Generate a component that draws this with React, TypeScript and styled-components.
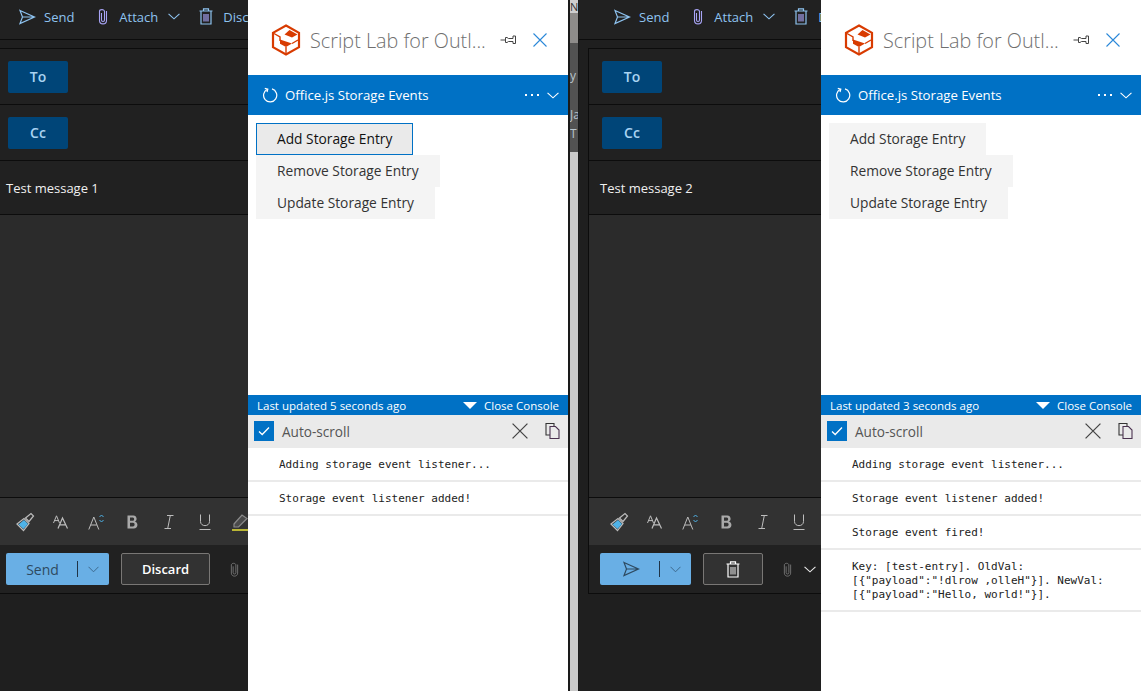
import React from 'react';
import styled, { createGlobalStyle } from 'styled-components';

const Global = createGlobalStyle`
  html, body { margin: 0; padding: 0; height: 100%; background: #1f1f1f; overflow: hidden; }
  #root { height: 100%; }
`;

const FONT = `"Open Sans", "Noto Sans", "Liberation Sans", sans-serif`;
const MONO = `"DejaVu Sans Mono", "Liberation Mono", monospace`;

const Page = styled.div`
  width: 1141px;
  height: 691px;
  display: flex;
  overflow: hidden;
  font-family: ${FONT};
`;

const Compose = styled.div<{ $w: number }>`
  width: ${p => p.$w}px;
  flex: none;
  height: 691px;
  background: #1f1f1f;
  overflow: hidden;
  display: flex;
  flex-direction: column;
`;

const CommandBar = styled.div<{ $inset: number }>`
  height: 40px;
  flex: none;
  box-sizing: border-box;
  display: flex;
  align-items: center;
  padding: 0 0 6px ${p => p.$inset}px;
  background: #212121;
  border-bottom: 1px solid #0c0c0c;
  white-space: nowrap;
  color: #8ec3f0;
  font-size: 13px;
`;

const Command = styled.div<{ $gap: number; $icon: number }>`
  display: flex;
  align-items: center;
  gap: ${p => p.$icon}px;
  margin-right: ${p => p.$gap}px;
  flex: none;
`;

const Card = styled.div<{ $inset: number }>`
  margin-top: 8px;
  margin-left: ${p => p.$inset}px;
  height: 544px;
  flex: none;
  border-top: 1px solid #0c0c0c;
  border-bottom: 1px solid #0c0c0c;
  border-left: ${p => (p.$inset ? '1px solid #0c0c0c' : 'none')};
  display: flex;
  flex-direction: column;
  background: #212121;
`;

const RecipientRow = styled.div`
  height: 55px;
  flex: none;
  display: flex;
  align-items: center;
  padding-left: 8px;
  border-bottom: 1px solid #0c0c0c;
`;

const RecipientButton = styled.div<{ $left: number }>`
  width: 60px;
  height: 32px;
  margin-left: ${p => p.$left}px;
  border-radius: 2px;
  background: #004578;
  color: #a9d3f2;
  font-size: 14px;
  font-weight: 600;
  display: flex;
  align-items: center;
  justify-content: center;
`;

const SubjectRow = styled.div<{ $left: number }>`
  height: 53px;
  flex: none;
  display: flex;
  align-items: center;
  padding-left: ${p => p.$left}px;
  border-bottom: 1px solid #0c0c0c;
  color: #f0f0f0;
  font-size: 13px;
  font-weight: 500;
`;

const Body = styled.div`
  flex: 1;
  background: #2b2b2b;
`;

const FormatBar = styled.div<{ $left: number }>`
  height: 47px;
  flex: none;
  background: #323232;
  border-top: 1px solid #0c0c0c;
  display: flex;
  align-items: center;
  padding-left: ${p => p.$left}px;
  gap: 12px;
  overflow: hidden;
`;

const FormatIcon = styled.div`
  width: 24px;
  height: 24px;
  flex: none;
  display: flex;
  align-items: center;
  justify-content: center;
`;

const SendBar = styled.div<{ $left: number }>`
  height: 48px;
  flex: none;
  display: flex;
  align-items: center;
  padding-left: ${p => p.$left}px;
  background: #212121;
  overflow: hidden;
`;

const SendButton = styled.div<{ $w: number }>`
  width: ${p => p.$w}px;
  height: 32px;
  flex: none;
  background: #69afe5;
  border-radius: 2px;
  display: flex;
  align-items: center;
  color: #2e4a60;
  font-size: 14px;
  font-weight: 500;
`;

const SendLabel = styled.div`
  flex: 1;
  display: flex;
  justify-content: center;
  padding-left: 2px;
`;

const SendDivider = styled.div`
  width: 1px;
  height: 16px;
  background: #1f3447;
  flex: none;
`;

const SendCaret = styled.div`
  width: 31px;
  flex: none;
  display: flex;
  justify-content: center;
  align-items: center;
`;

const DiscardButton = styled.div<{ $w: number; $left: number }>`
  width: ${p => p.$w}px;
  height: 32px;
  margin-left: ${p => p.$left}px;
  flex: none;
  box-sizing: border-box;
  border: 1px solid #797775;
  border-radius: 2px;
  background: #323232;
  color: #fff;
  font-size: 13px;
  font-weight: 600;
  display: flex;
  align-items: center;
  justify-content: center;
`;

const Clip = styled.div<{ $left: number }>`
  margin-left: ${p => p.$left}px;
  flex: none;
  display: flex;
  align-items: center;
`;

const MoreCaret = styled.div`
  margin-left: 12px;
  flex: none;
  display: flex;
  align-items: center;
`;

const Pane = styled.div`
  width: 320px;
  flex: none;
  height: 691px;
  background: #fff;
  display: flex;
  flex-direction: column;
`;

const PaneHeader = styled.div`
  height: 75px;
  flex: none;
  display: flex;
  align-items: center;
  padding: 5px 21px 0 23px;
  box-sizing: border-box;
  color: #6f6f6f;
`;

const PaneTitle = styled.div`
  flex: 1;
  margin-left: 9px;
  font-size: 19.8px;
  font-weight: 300;
  white-space: nowrap;
  overflow: hidden;
`;

const PaneActions = styled.div`
  display: flex;
  align-items: center;
  gap: 16px;
  margin-top: -1px;
`;

const SnippetBar = styled.div`
  height: 40px;
  flex: none;
  background: #0071c5;
  color: #fff;
  display: flex;
  align-items: center;
  padding: 0 9px 0 14px;
  font-size: 13.2px;
`;

const SnippetName = styled.div`
  flex: 1;
  margin-left: 7px;
`;

const Dots = styled.div`
  display: flex;
  gap: 4px;
  margin-right: 8px;
`;

const Dot = styled.span`
  width: 2px;
  height: 2px;
  background: #fff;
`;

const Runner = styled.div`
  height: 280px;
  flex: none;
  padding: 8px 0 0 8px;
  box-sizing: border-box;
  display: flex;
  flex-direction: column;
  align-items: flex-start;
`;

const RunButton = styled.div<{ $focused?: boolean }>`
  height: 32px;
  box-sizing: border-box;
  padding: 0 ${p => (p.$focused ? 20 : 21)}px 2px;
  display: flex;
  align-items: center;
  font-size: 13.75px;
  font-weight: 500;
  background: ${p => (p.$focused ? '#eaeaea' : '#f4f4f4')};
  color: ${p => (p.$focused ? '#111' : '#333')};
  border: ${p => (p.$focused ? '1px solid #0071c5' : 'none')};
`;

const StatusBar = styled.div`
  height: 20px;
  flex: none;
  background: #0071c5;
  color: #fff;
  display: flex;
  align-items: center;
  justify-content: space-between;
  padding: 0 9px;
  font-size: 11.5px;
`;

const StatusAction = styled.div`
  display: flex;
  align-items: center;
  gap: 7px;
`;

const Triangle = styled.div`
  width: 0;
  height: 0;
  border-left: 7px solid transparent;
  border-right: 7px solid transparent;
  border-top: 7px solid #fff;
`;

const ConsoleTools = styled.div`
  height: 33px;
  flex: none;
  box-sizing: border-box;
  background: #eaeaea;
  display: flex;
  align-items: center;
  padding: 0 8px 1px 6px;
  color: #555;
  font-size: 13.6px;
`;

const CheckBox = styled.div`
  width: 20px;
  height: 20px;
  flex: none;
  background: #0071c5;
  display: flex;
  align-items: center;
  justify-content: center;
  margin-right: 8px;
`;

const ConsoleLabel = styled.div`
  flex: 1;
`;

const ToolIcons = styled.div`
  display: flex;
  align-items: center;
  gap: 17px;
`;

const LogList = styled.div`
  display: flex;
  flex-direction: column;
`;

const LogRow = styled.div<{ $h: number }>`
  height: ${p => p.$h}px;
  box-sizing: border-box;
  padding: 10px 16px 0 31px;
  border-bottom: 2px solid #eaeaea;
  font-family: ${MONO};
  font-size: 11px;
  line-height: 14px;
  color: #222;
  white-space: nowrap;
`;

const Divider = styled.div`
  width: 11px;
  height: 691px;
  flex: none;
  box-sizing: border-box;
  border-left: 2px solid #1a1a1a;
  border-right: 1px solid #1a1a1a;
  display: flex;
  flex-direction: column;
  overflow: hidden;
  background: #c9c9c9;
`;

const StripTab = styled.div`
  height: 13px;
  flex: none;
  background: #cfcfcf;
  color: #333;
  font-size: 11px;
  line-height: 13px;
  white-space: nowrap;
`;

const StripThumb = styled.div`
  height: 30px;
  flex: none;
  background: #8e8c8a;
`;

const StripList = styled.div`
  height: 109px;
  flex: none;
  background: #525252;
  color: #b9c4cc;
  font-size: 12px;
  white-space: nowrap;
  display: flex;
  flex-direction: column;
  padding-top: 24px;
  box-sizing: border-box;
  line-height: 18px;
`;

const StripLine = styled.span<{ $after: number }>`
  margin-bottom: ${p => p.$after}px;
`;

const SendIcon = ({ color = '#8ec3f0', size = 18 }: { color?: string; size?: number }) => (
  <svg width={size} height={size} viewBox="0 0 18 18" fill="none" stroke={color} strokeWidth="1.2">
    <path d="M2 2.5 L16.5 9 L2 15.5 L4.5 9 Z M4.5 9 H16.5" />
  </svg>
);

const ClipIcon = ({ color, width = 10, height = 17 }: { color: string; width?: number; height?: number }) => (
  <svg width={width} height={height} viewBox="0 0 10 17" fill="none" stroke={color} strokeWidth="1.1">
    <path d="M3.5 5 V12 C3.5 14 6.5 14 6.5 12 V3.5 C6.5 1 1.5 1 1.5 3.5 V12.5 C1.5 17 8.5 17 8.5 12.5 V3" />
  </svg>
);

const TrashIcon = ({ color, fill }: { color: string; fill: string }) => (
  <svg width="14" height="17" viewBox="0 0 14 17" fill="none" stroke={color} strokeWidth="1.2">
    <path d="M0.5 3 H13.5 M4.5 3 V0.8 H9.5 V3 M2 3 V16 H12 V3" />
    <path d="M5 6 V13.5 M7 6 V13.5 M9 6 V13.5" stroke={fill} />
  </svg>
);

const Chevron = ({ color, w = 11 }: { color: string; w?: number }) => (
  <svg width={w} height="7" viewBox="0 0 11 7" fill="none" stroke={color} strokeWidth="1" preserveAspectRatio="none">
    <path d="M0.5 0.8 L5.5 5.8 L10.5 0.8" />
  </svg>
);

const Logo = () => (
  <svg width="30" height="32" viewBox="0 0 30 32">
    <path d="M15 1.5 L28 8.8 V23.2 L15 30.5 L2 23.2 V8.8 Z" fill="none" stroke="#d83b01" strokeWidth="2.2" />
    <path d="M18.5 6 L26.5 10.5 L21 13.5 L13.5 10.5 Z" fill="#d83b01" />
    <path d="M9 15.5 L21 19.5 L15 23 L9 19.8 Z" fill="#d83b01" />
    <path d="M15 23 V29.5 M3 9.5 L9 13 V17 M21 19.5 L27 16" fill="none" stroke="#d83b01" strokeWidth="1.4" />
  </svg>
);

const PinIcon = () => (
  <svg width="17" height="10" viewBox="0 0 16 10" fill="none" stroke="#444" strokeWidth="1">
    <path d="M0 5 H5 M5 2.5 H6.5 L8 3.5 H12.5 V1 H15 V8.5 H12.5 V6.5 H8 L6.5 7.5 H5 Z" />
  </svg>
);

const CloseIcon = ({ color, size, stroke = 1.1 }: { color: string; size: number; stroke?: number }) => (
  <svg width={size} height={size} viewBox="0 0 14 14" stroke={color} strokeWidth={stroke} fill="none">
    <path d="M0.5 0.5 L13.5 13.5 M13.5 0.5 L0.5 13.5" />
  </svg>
);

const RefreshIcon = () => (
  <svg width="16" height="16" viewBox="0 0 16 16" fill="none" stroke="#fff" strokeWidth="1.2">
    <path d="M5.5 2.2 A6.6 6.6 0 1 0 10 1.9" />
    <path d="M2.8 1.4 L5.8 2.2 L5 5" />
  </svg>
);

const CopyIcon = () => (
  <svg width="15" height="16" viewBox="0 0 15 16" fill="none" stroke="#333" strokeWidth="1.1">
    <path d="M9 3 V0.5 H1 V12 H5" />
    <path d="M5 3.5 H10.5 L14 7 V15.5 H5 Z" stroke="#4b3350" />
  </svg>
);

const CheckIcon = () => (
  <svg width="12" height="10" viewBox="0 0 12 10" fill="none" stroke="#fff" strokeWidth="1.3">
    <path d="M1 5.5 L4.2 8.5 L11 1.5" />
  </svg>
);

const BrushIcon = () => (
  <svg width="20" height="20" viewBox="0 0 20 20" fill="none" stroke="#bdbdbd" strokeWidth="1.2">
    <path d="M2 12 L9 6.5 L14 11.5 L8.5 18.5 Z" />
    <path d="M3.5 12.5 L9 8 L13 12 L8.5 17 Z" fill="#4fb3e8" stroke="none" />
    <path d="M10.5 6 L16 1.5 L18.5 4 L14 9.5 Z" />
  </svg>
);

const FontSizeIcon = () => (
  <svg width="16" height="14" viewBox="0 0 16 14" fill="none" stroke="#bdbdbd" strokeWidth="1">
    <path d="M0.5 8 L3.5 0.8 L6.5 8 M1.6 5.6 H5.4" />
    <path d="M5 13.5 L9.5 3 L14.5 13.5 M6.8 9.8 H12.8" strokeWidth="1.2" />
  </svg>
);

const GrowIcon = () => (
  <svg width="18" height="16" viewBox="0 0 18 16" fill="none" stroke="#bdbdbd" strokeWidth="1">
    <path d="M0.8 15.5 L5.8 3 L10.8 15.5 M2.8 11 H8.8" />
    <path d="M11.5 3 L13.5 1 L15.5 3 M11.5 6 L13.5 8 L15.5 6" stroke="#4fb3e8" />
  </svg>
);

const BoldIcon = () => (
  <svg width="12" height="14" viewBox="0 0 12 14">
    <path fillRule="evenodd" fill="#a9a9a9" d="M0.5 0.5 H6.5 C10 0.5 10.8 5.5 7.8 6.6 C11.5 7.4 11.5 13.5 6.8 13.5 H0.5 Z M3 2.5 V5.8 H5.8 C7.6 5.8 7.6 2.5 5.8 2.5 Z M3 7.8 V11.5 H6 C8.2 11.5 8.2 7.8 6 7.8 Z" />
  </svg>
);

const ItalicIcon = () => (
  <svg width="10" height="14" viewBox="0 0 10 14" fill="none" stroke="#bdbdbd" strokeWidth="1">
    <path d="M3 0.5 H9.5 M0.5 13.5 H7 M6.3 0.5 L3.7 13.5" />
  </svg>
);

const UnderlineIcon = () => (
  <svg width="12" height="16" viewBox="0 0 12 16" fill="none" stroke="#bdbdbd" strokeWidth="1">
    <path d="M1.5 0.5 V7.5 C1.5 13 10.5 13 10.5 7.5 V0.5 M0.5 15.5 H11.5" />
  </svg>
);

const HighlightIcon = () => (
  <svg width="18" height="18" viewBox="0 0 18 18" fill="none">
    <path d="M2 11 L10 2 L15 5.5 L6.5 14 H2 Z" stroke="#8a8a8a" strokeWidth="1.2" fill="#4a4a4a" />
    <path d="M0 17 H18" stroke="#e8e337" strokeWidth="1.5" />
  </svg>
);

const AttachChevron = styled.span`
  display: flex;
  margin-left: -1px;
`;

const Commands = ({ inset }: { inset: number }) => (
  <CommandBar $inset={inset}>
    <Command $gap={24} $icon={8}><SendIcon />Send</Command>
    <Command $gap={19} $icon={11}>
      <ClipIcon color="#a8a4f5" />
      <span>Attach</span>
      <AttachChevron><Chevron color="#8ec3f0" w={12} /></AttachChevron>
    </Command>
    <Command $gap={0} $icon={10}><TrashIcon color="#8ec3f0" fill="#a8a4f5" />Discard</Command>
  </CommandBar>
);

const Formatting = ({ left, highlight }: { left: number; highlight: boolean }) => (
  <FormatBar $left={left}>
    <FormatIcon><BrushIcon /></FormatIcon>
    <FormatIcon><FontSizeIcon /></FormatIcon>
    <FormatIcon><GrowIcon /></FormatIcon>
    <FormatIcon><BoldIcon /></FormatIcon>
    <FormatIcon><ItalicIcon /></FormatIcon>
    <FormatIcon><UnderlineIcon /></FormatIcon>
    {highlight && <FormatIcon><HighlightIcon /></FormatIcon>}
  </FormatBar>
);

type PaneProps = { updated: string; logs: { h: number; text: React.ReactNode }[]; focused?: boolean };

const ScriptLabPane = ({ updated, logs, focused }: PaneProps) => (
  <Pane>
    <PaneHeader>
      <Logo />
      <PaneTitle>Script Lab for Outl...</PaneTitle>
      <PaneActions>
        <PinIcon />
        <CloseIcon color="#2b88d8" size={14} />
      </PaneActions>
    </PaneHeader>
    <SnippetBar>
      <RefreshIcon />
      <SnippetName>Office.js Storage Events</SnippetName>
      <Dots><Dot /><Dot /><Dot /></Dots>
      <Chevron color="#fff" w={12} />
    </SnippetBar>
    <Runner>
      <RunButton $focused={focused}>Add Storage Entry</RunButton>
      <RunButton>Remove Storage Entry</RunButton>
      <RunButton>Update Storage Entry</RunButton>
    </Runner>
    <StatusBar>
      <div>Last updated {updated} seconds ago</div>
      <StatusAction><Triangle />Close Console</StatusAction>
    </StatusBar>
    <ConsoleTools>
      <CheckBox><CheckIcon /></CheckBox>
      <ConsoleLabel>Auto-scroll</ConsoleLabel>
      <ToolIcons>
        <CloseIcon color="#444" size={16} />
        <CopyIcon />
      </ToolIcons>
    </ConsoleTools>
    <LogList>
      {logs.map((l, i) => <LogRow key={i} $h={l.h}>{l.text}</LogRow>)}
    </LogList>
  </Pane>
);

const baseLogs = [
  { h: 34, text: 'Adding storage event listener...' },
  { h: 34, text: 'Storage event listener added!' },
];

export default function App() {
  return (
    <Page>
      <Global />
      <Compose $w={248}>
        <Commands inset={18} />
        <Card $inset={0}>
          <RecipientRow><RecipientButton $left={0}>To</RecipientButton></RecipientRow>
          <RecipientRow><RecipientButton $left={0}>Cc</RecipientButton></RecipientRow>
          <SubjectRow $left={6}>Test message 1</SubjectRow>
          <Body />
          <Formatting left={13} highlight />
          <SendBar $left={6}>
            <SendButton $w={103}>
              <SendLabel>Send</SendLabel>
              <SendDivider />
              <SendCaret><Chevron color="#3d6a8e" /></SendCaret>
            </SendButton>
            <DiscardButton $w={89} $left={12}>Discard</DiscardButton>
            <Clip $left={20}><ClipIcon color="#6f6f6f" width={9} height={17} /></Clip>
          </SendBar>
        </Card>
      </Compose>
      <ScriptLabPane updated="5" logs={baseLogs} focused />
      <Divider>
        <StripTab>Ne</StripTab>
        <StripThumb />
        <StripList>
          <StripLine $after={21}>y</StripLine>
          <StripLine $after={1}>Ja</StripLine>
          <StripLine $after={0}>T</StripLine>
        </StripList>
      </Divider>
      <Compose $w={242}>
        <Commands inset={34} />
        <Card $inset={9}>
          <RecipientRow><RecipientButton $left={5}>To</RecipientButton></RecipientRow>
          <RecipientRow><RecipientButton $left={5}>Cc</RecipientButton></RecipientRow>
          <SubjectRow $left={11}>Test message 2</SubjectRow>
          <Body />
          <Formatting left={18} highlight={false} />
          <SendBar $left={11}>
            <SendButton $w={91}>
              <SendLabel><SendIcon color="#2e4a60" /></SendLabel>
              <SendDivider />
              <SendCaret><Chevron color="#3d6a8e" /></SendCaret>
            </SendButton>
            <DiscardButton $w={60} $left={12}><TrashIcon color="#fff" fill="#cfcfcf" /></DiscardButton>
            <Clip $left={20}><ClipIcon color="#6f6f6f" width={9} height={17} /></Clip>
            <MoreCaret><Chevron color="#e8e8e8" w={12} /></MoreCaret>
          </SendBar>
        </Card>
      </Compose>
      <ScriptLabPane
        updated="3"
        logs={[
          ...baseLogs,
          { h: 34, text: 'Storage event fired!' },
          { h: 62, text: <>Key: [test-entry]. OldVal:<br />[{'{'}"payload":"!dlrow ,olleH"{'}'}]. NewVal:<br />[{'{'}"payload":"Hello, world!"{'}'}].</> },
        ]}
      />
    </Page>
  );
}
